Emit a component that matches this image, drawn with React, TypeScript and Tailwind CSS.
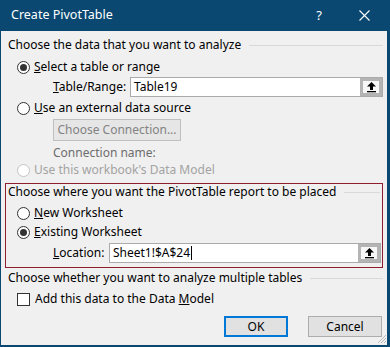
import React from "react";

const FONT = "font-['Noto_Sans','Open_Sans',sans-serif]";

function Radio({ checked, disabled }: { checked?: boolean; disabled?: boolean }) {
  return (
    <span
      className={
        "flex h-[13px] w-[13px] shrink-0 items-center justify-center rounded-full border bg-white " +
        (disabled ? "border-[#c4c4c4]" : "border-[#333333]")
      }
    >
      {checked && <span className="h-[7px] w-[7px] rounded-full bg-[#333333]" />}
    </span>
  );
}

// little "collapse dialog" button at the right of the range boxes
function PickButton() {
  return (
    <div className="flex h-full w-[22px] shrink-0 items-center justify-center border-[3px] border-[#b4b4b4] bg-[#f7f7f7]">
      <svg width="11" height="12" viewBox="0 0 11 12">
        <path d="M5.5 1 L10 5.5 L7 5.5 L7 9 L4 9 L4 5.5 L1 5.5 Z" fill="#000" />
        <rect x="1" y="10" width="9" height="1.3" fill="#000" />
      </svg>
    </div>
  );
}

function Header({ children }: { children: React.ReactNode }) {
  return (
    <div className="flex h-4 items-center pl-[7px] pr-[4px]">
      <span className="whitespace-nowrap">{children}</span>
      <span className="ml-[8px] h-px flex-1 bg-[#d9d9d9]" />
    </div>
  );
}

function RadioRow({
  checked,
  disabled,
  children,
  className = "",
}: {
  checked?: boolean;
  disabled?: boolean;
  children: React.ReactNode;
  className?: string;
}) {
  return (
    <div className={"flex h-4 items-center gap-[4px] pl-[16px] " + className}>
      <Radio checked={checked} disabled={disabled} />
      <span className={disabled ? "text-[#a3a3a3]" : ""}>{children}</span>
    </div>
  );
}

export default function App() {
  return (
    <div className={`${FONT} h-[347px] w-[390px] overflow-hidden bg-[#0a4872] text-[12px] leading-4 text-black`}>
      {/* Title bar */}
      <div className="flex h-[31px] items-center pl-[11px] text-[12.5px] text-white">
        <span className="flex-1 pb-[1px]">Create PivotTable</span>
        <span className="mr-[37px] pb-[1px] text-[13px]">?</span>
        <svg width="11" height="11" viewBox="0 0 11 11" className="mr-[20px]">
          <path d="M0.5 0.5 L10.5 10.5 M10.5 0.5 L0.5 10.5" stroke="#fff" strokeWidth="1.1" />
        </svg>
      </div>

      {/* Body */}
      <div className="relative ml-px mr-[3px] flex h-[314px] flex-col bg-[#f0f0f0] pt-[6px]">
        <Header>Choose the data that you want to analyze</Header>

        <RadioRow checked className="mt-[6px]">
          <u>S</u>elect a table or range
        </RadioRow>

        <div className="mt-[2px] flex h-5 items-center pl-[52px] pr-[4px]">
          <span className="w-[77px]">
            <u>T</u>able/Range:
          </span>
          <div className="flex h-5 flex-1 items-center border border-[#ababab] bg-white">
            <span className="flex-1 pl-[3px]">Table19</span>
            <PickButton />
          </div>
        </div>

        <RadioRow className="mt-[3px]">
          <u>U</u>se an external data source
        </RadioRow>

        <div className="mt-[3px] pl-[52px]">
          <div className="flex h-[22px] w-[128px] items-center justify-center border border-[#c0c0c0] bg-[#e6e6e6] text-[#838383]">
            Choose Connection...
          </div>
        </div>

        <div className="mt-[4px] flex h-4 items-center pl-[52px] text-[#6d6d6d]">Connection name:</div>

        <RadioRow disabled className="mt-[1px]">
          Use this workbook's Data Model
        </RadioRow>

        {/* Highlighted group */}
        <div className="mx-[4px] mt-[5px] flex flex-col border border-[#8e1d2e] pb-[4px]">
          <div className="-ml-[5px] -mr-[2px]">
            <Header>Choose where you want the PivotTable report to be placed</Header>
          </div>
          <RadioRow className="-ml-[5px] mt-[5px]">
            <u>N</u>ew Worksheet
          </RadioRow>
          <RadioRow checked className="-ml-[5px] mt-[3px]">
            <u>E</u>xisting Worksheet
          </RadioRow>
          <div className="mt-[3px] flex h-5 items-center pl-[47px] pr-px">
            <span className="w-[56px]">
              <u>L</u>ocation:
            </span>
            <div className="flex h-5 flex-1 items-center border border-[#ababab] bg-white">
              <span className="flex flex-1 items-center pl-[3px]">
                Sheet1!$A$24
                <span className="ml-px h-[14px] w-px bg-black" />
              </span>
              <PickButton />
            </div>
          </div>
        </div>

        <div className="mt-[2px]">
          <Header>Choose whether you want to analyze multiple tables</Header>
        </div>

        <div className="mt-[5px] flex h-4 items-center gap-[5px] pl-[16px]">
          <span className="h-[13px] w-[13px] border border-[#333333] bg-white" />
          <span>
            Add this data to the Data <u>M</u>odel
          </span>
        </div>

        <div className="mt-[9px] flex justify-end gap-[20px] pr-[5px]">
          <div className="flex h-[21px] w-[64px] items-center justify-center border-2 border-[#0078d7] bg-[#e1e1e1]">
            OK
          </div>
          <div className="flex h-[21px] w-[74px] items-center justify-center border border-[#adadad] bg-[#e1e1e1]">
            Cancel
          </div>
        </div>

        {/* size grip */}
        <svg width="10" height="10" viewBox="0 0 10 10" className="absolute bottom-[1px] right-[0px]">
          <path d="M9 1 L1 9 M9 4 L4 9 M9 7 L7 9" stroke="#b8b8b8" strokeWidth="1" />
        </svg>
      </div>
    </div>
  );
}
